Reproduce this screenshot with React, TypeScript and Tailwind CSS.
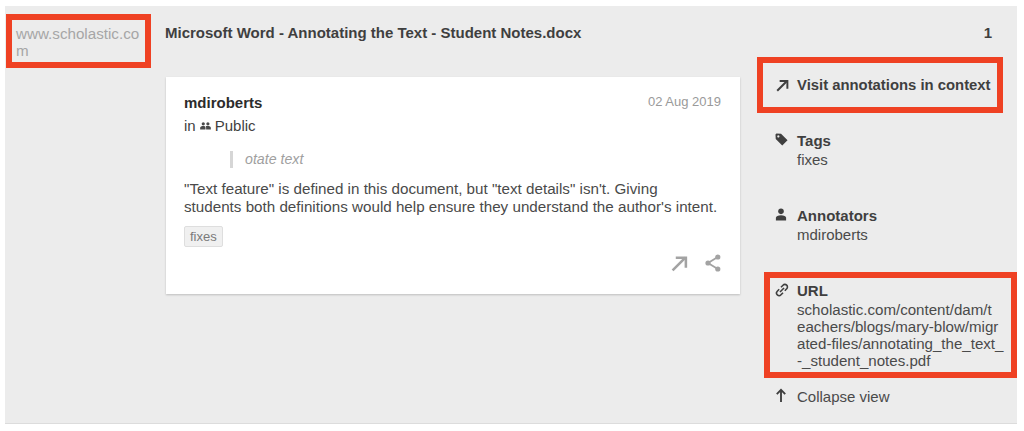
const font = "font-['Liberation_Sans',Arial,sans-serif]";

function ArrowUpRight({ className }: { className?: string }) {
  return (
    <svg viewBox="0 0 16 16" className={className} fill="none" stroke="currentColor" strokeWidth="2.4">
      <path d="M1.5 14.5 13.5 2.5" />
      <path d="M4.5 2.5h9.5V12" />
    </svg>
  );
}

function TagIcon() {
  return (
    <svg viewBox="0 0 14 14" className="h-[13px] w-[13px]" fill="currentColor">
      <path d="M0.5 1.5 1.5 0.5 6.5 0.8 13.5 7.8 7.8 13.5 0.8 6.5Z M3.6 2.4a1.2 1.2 0 1 0 0.01 0Z" fillRule="evenodd" />
    </svg>
  );
}

function PersonIcon() {
  return (
    <svg viewBox="0 0 12 14" className="h-[13px] w-[12px]" fill="currentColor">
      <circle cx="6" cy="3.6" r="3" />
      <path d="M0.5 13.5V10.6C0.5 8.8 3 7.8 6 7.8s5.5 1 5.5 2.8v2.9Z" />
    </svg>
  );
}

function LinkIcon() {
  return (
    <svg viewBox="0 0 14 14" className="h-[14px] w-[14px]" fill="none" stroke="currentColor" strokeWidth="1.6">
      <path d="M6 4.2 8 2.2a2.5 2.5 0 0 1 3.7 3.6L9.8 7.7" />
      <path d="M8 9.8 6 11.8a2.5 2.5 0 0 1-3.7-3.6l1.9-1.9" />
      <path d="M5 9 9 5" />
    </svg>
  );
}

function ArrowUp() {
  return (
    <svg viewBox="0 0 12 16" className="h-[15px] w-[12px]" fill="none" stroke="currentColor" strokeWidth="2">
      <path d="M6 15V2" />
      <path d="M1.5 6.5 6 2l4.5 4.5" />
    </svg>
  );
}

function GroupIcon() {
  return (
    <svg viewBox="0 0 12 9" className="h-[8px] w-[11px]" fill="currentColor">
      <circle cx="3.5" cy="2" r="1.8" />
      <circle cx="8.7" cy="2" r="1.8" />
      <path d="M0 8.5V6.6C0 5.3 1.7 4.6 3.5 4.6S6 5.3 6 6.6v1.9Z" />
      <path d="M6.7 8.5V6.4C6.7 5.6 6.5 5.2 6.2 4.8c.7-.2 1.6-.3 2.5-.2 1.7 0 3.3.7 3.3 2v1.9Z" />
    </svg>
  );
}

function ShareIcon() {
  return (
    <svg viewBox="0 0 16 18" className="h-[18px] w-[16px]" fill="currentColor" stroke="currentColor">
      <circle cx="12.8" cy="3" r="2.6" stroke="none" />
      <circle cx="3" cy="9" r="2.6" stroke="none" />
      <circle cx="12.8" cy="15" r="2.6" stroke="none" />
      <path d="M12.8 3 3 9l9.8 6" fill="none" strokeWidth="1.8" />
    </svg>
  );
}

function SideItem({ icon, title, children }: { icon: React.ReactNode; title: string; children: React.ReactNode }) {
  return (
    <div className="flex">
      <div className="flex w-[22px] shrink-0 pt-[3px] text-[#3f3f3f]">{icon}</div>
      <div className="min-w-0">
        <div className="text-[15px] leading-[21px] font-bold text-[#3f3f3f]">{title}</div>
        <div className="text-[15px] leading-[17px] text-[#4a4a4a]">{children}</div>
      </div>
    </div>
  );
}

export default function App() {
  return (
    <main className={`relative h-[431px] w-[1024px] overflow-hidden bg-white pt-[6px] pr-[7px] pl-[5px] ${font}`}>
      <div className="flex h-[418px] border-b border-[#dcdcdc] bg-[#ececec]">
        {/* Domain */}
        <div className="w-[161px] shrink-0 pt-[19px] pl-[11px]">
          <div className="w-[127px] text-[15.2px] leading-[17px] break-all text-[#a6a6a6]">www.scholastic.com</div>
        </div>

        {/* Title + card */}
        <div className="w-[574px] shrink-0">
          <h1 className="mt-[18px] -ml-[1px] text-[15px] leading-[17px] font-bold text-[#3f3f3f]">
            Microsoft Word - Annotating the Text - Student Notes.docx
          </h1>
          <article className="mt-[36px] h-[217px] bg-white px-[18px] pt-[17px] shadow-[0_1px_2px_rgba(0,0,0,0.2)]">
            <div className="flex items-start justify-between">
              <div className="text-[15px] leading-[18px] font-bold text-[#2c2c2c]">mdiroberts</div>
              <div className="mr-[1px] text-[13px] leading-[16px] text-[#9a9a9a]">02 Aug 2019</div>
            </div>
            <div className="mt-[5px] flex items-center text-[15px] leading-[18px] text-[#3f3f3f]">
              in
              <span className="mr-[4px] ml-[4px] text-[#4a4a4a]">
                <GroupIcon />
              </span>
              Public
            </div>
            <blockquote className="mt-[16px] ml-[46px] border-l-[3px] border-[#d6d6d6] pl-[12px] text-[14.2px] leading-[17px] text-[#a0a0a0] italic">
              otate text
            </blockquote>
            <p className="mt-[12px] text-[15.2px] leading-[18px] text-[#4a4a4a]">
              "Text feature" is defined in this document, but "text details" isn't. Giving
              <br />
              students both definitions would help ensure they understand the author's intent.
            </p>
            <div className="mt-[10px] flex items-start justify-between">
              <span className="rounded-[2px] border border-[#dedede] bg-[#f0f0f0] px-[5px] text-[13px] leading-[19px] text-[#7a7a7a]">
                fixes
              </span>
              <div className="mt-[28px] mr-[1px] flex items-center gap-[17px] text-[#a3a3a3]">
                <ArrowUpRight className="h-[17px] w-[17px]" />
                <ShareIcon />
              </div>
            </div>
          </article>
        </div>

        {/* Side column */}
        <div className="min-w-0 flex-1 pl-[35px]">
          <div className="flex justify-end pt-[18px] pr-[25px] text-[15px] leading-[17px] font-bold text-[#3f3f3f]">1</div>
          <div className="mt-[35px] flex text-[14.85px] leading-[18px] font-bold text-[#3f3f3f]">
            <span className="flex w-[22px] shrink-0 items-center pl-[1px]">
              <ArrowUpRight className="h-[13px] w-[13px]" />
            </span>
            Visit annotations in context
          </div>
          <div className="mt-[36px]">
            <SideItem icon={<TagIcon />} title="Tags">fixes</SideItem>
          </div>
          <div className="mt-[37px]">
            <SideItem icon={<PersonIcon />} title="Annotators">mdiroberts</SideItem>
          </div>
          <div className="mt-[37px]">
            <SideItem icon={<LinkIcon />} title="URL">
              <div className="text-[15.1px] whitespace-nowrap">
                scholastic.com/content/dam/t
                <br />
                eachers/blogs/mary-blow/migr
                <br />
                ated-files/annotating_the_text_
                <br />
                -_student_notes.pdf
              </div>
            </SideItem>
          </div>
          <div className="mt-[19px] flex text-[15px] leading-[18px] text-[#4a4a4a]">
            <span className="flex w-[22px] shrink-0 text-[#3f3f3f]">
              <ArrowUp />
            </span>
            Collapse view
          </div>
        </div>
      </div>

      {/* Red highlight boxes drawn over the page */}
      <div className="absolute top-[14px] left-[6px] h-[54px] w-[145px] border-[6px] border-[#ef4123]" />
      <div className="absolute top-[57px] left-[757px] h-[56px] w-[246px] border-[6px] border-[#ef4123]" />
      <div className="absolute top-[272px] left-[764px] h-[106px] w-[253px] border-[6px] border-[#ef4123]" />
    </main>
  );
}
